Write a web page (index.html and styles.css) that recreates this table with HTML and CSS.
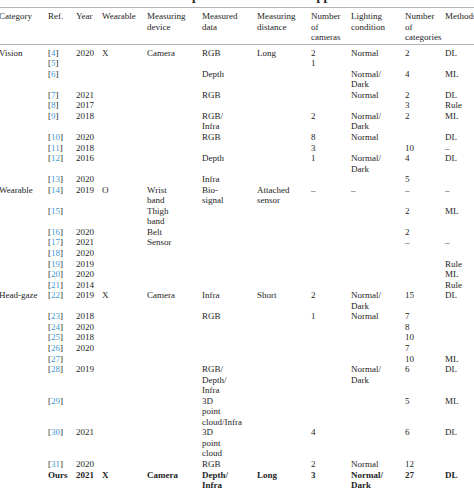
FILE: index.html
```html
<!DOCTYPE html>
<html lang="en">
<head>
<meta charset="utf-8">
<title>Comparison table</title>
<link rel="stylesheet" href="styles.css">
</head>
<body>
<div class="caption">Table 1 Comparison of the related approaches</div>
<table class="cmp">
<colgroup>
<col class="c-cat"><col class="c-ref"><col class="c-year"><col class="c-wear"><col class="c-dev"><col class="c-data"><col class="c-dist"><col class="c-cam"><col class="c-light"><col class="c-ncat"><col class="c-meth">
</colgroup>
<thead>
<tr><th>Category</th><th>Ref.</th><th>Year</th><th>Wearable</th><th>Measuring<br>device</th><th>Measured<br>data</th><th>Measuring<br>distance</th><th>Number<br>of<br>cameras</th><th>Lighting<br>condition</th><th>Number<br>of<br>categories</th><th>Methods</th></tr>
</thead>
<tbody>
<tr class="first"><td>Vision</td><td>[<a>4</a>]</td><td>2020</td><td>X</td><td>Camera</td><td>RGB</td><td>Long</td><td>2</td><td>Normal</td><td>2</td><td>DL</td></tr>
<tr><td></td><td>[<a>5</a>]</td><td></td><td></td><td></td><td></td><td></td><td>1</td><td></td><td></td><td></td></tr>
<tr><td></td><td>[<a>6</a>]</td><td></td><td></td><td></td><td>Depth</td><td></td><td></td><td>Normal/<br>Dark</td><td>4</td><td>ML</td></tr>
<tr><td></td><td>[<a>7</a>]</td><td>2021</td><td></td><td></td><td>RGB</td><td></td><td></td><td>Normal</td><td>2</td><td>DL</td></tr>
<tr><td></td><td>[<a>8</a>]</td><td>2017</td><td></td><td></td><td></td><td></td><td></td><td></td><td>3</td><td>Rule</td></tr>
<tr><td></td><td>[<a>9</a>]</td><td>2018</td><td></td><td></td><td>RGB/<br>Infra</td><td></td><td>2</td><td>Normal/<br>Dark</td><td>2</td><td>ML</td></tr>
<tr><td></td><td>[<a>10</a>]</td><td>2020</td><td></td><td></td><td>RGB</td><td></td><td>8</td><td>Normal</td><td></td><td>DL</td></tr>
<tr><td></td><td>[<a>11</a>]</td><td>2018</td><td></td><td></td><td></td><td></td><td>3</td><td></td><td>10</td><td>–</td></tr>
<tr><td></td><td>[<a>12</a>]</td><td>2016</td><td></td><td></td><td>Depth</td><td></td><td>1</td><td>Normal/<br>Dark</td><td>4</td><td>DL</td></tr>
<tr><td></td><td>[<a>13</a>]</td><td>2020</td><td></td><td></td><td>Infra</td><td></td><td></td><td></td><td>5</td><td></td></tr>
<tr><td>Wearable</td><td>[<a>14</a>]</td><td>2019</td><td>O</td><td>Wrist<br>band</td><td>Bio-<br>signal</td><td>Attached<br>sensor</td><td>–</td><td>–</td><td>–</td><td>–</td></tr>
<tr><td></td><td>[<a>15</a>]</td><td></td><td></td><td>Thigh<br>band</td><td></td><td></td><td></td><td></td><td>2</td><td>ML</td></tr>
<tr><td></td><td>[<a>16</a>]</td><td>2020</td><td></td><td>Belt</td><td></td><td></td><td></td><td></td><td>2</td><td></td></tr>
<tr><td></td><td>[<a>17</a>]</td><td>2021</td><td></td><td>Sensor</td><td></td><td></td><td></td><td></td><td>–</td><td>–</td></tr>
<tr><td></td><td>[<a>18</a>]</td><td>2020</td><td></td><td></td><td></td><td></td><td></td><td></td><td></td><td></td></tr>
<tr><td></td><td>[<a>19</a>]</td><td>2019</td><td></td><td></td><td></td><td></td><td></td><td></td><td></td><td>Rule</td></tr>
<tr><td></td><td>[<a>20</a>]</td><td>2020</td><td></td><td></td><td></td><td></td><td></td><td></td><td></td><td>ML</td></tr>
<tr><td></td><td>[<a>21</a>]</td><td>2014</td><td></td><td></td><td></td><td></td><td></td><td></td><td></td><td>Rule</td></tr>
<tr><td>Head-gaze</td><td>[<a>22</a>]</td><td>2019</td><td>X</td><td>Camera</td><td>Infra</td><td>Short</td><td>2</td><td>Normal/<br>Dark</td><td>15</td><td>DL</td></tr>
<tr><td></td><td>[<a>23</a>]</td><td>2018</td><td></td><td></td><td>RGB</td><td></td><td>1</td><td>Normal</td><td>7</td><td></td></tr>
<tr><td></td><td>[<a>24</a>]</td><td>2020</td><td></td><td></td><td></td><td></td><td></td><td></td><td>8</td><td></td></tr>
<tr><td></td><td>[<a>25</a>]</td><td>2018</td><td></td><td></td><td></td><td></td><td></td><td></td><td>10</td><td></td></tr>
<tr><td></td><td>[<a>26</a>]</td><td>2020</td><td></td><td></td><td></td><td></td><td></td><td></td><td>7</td><td></td></tr>
<tr><td></td><td>[<a>27</a>]</td><td></td><td></td><td></td><td></td><td></td><td></td><td></td><td>10</td><td>ML</td></tr>
<tr><td></td><td>[<a>28</a>]</td><td>2019</td><td></td><td></td><td>RGB/<br>Depth/<br>Infra</td><td></td><td></td><td>Normal/<br>Dark</td><td>6</td><td>DL</td></tr>
<tr><td></td><td>[<a>29</a>]</td><td></td><td></td><td></td><td>3D<br>point<br>cloud/Infra</td><td></td><td></td><td></td><td>5</td><td>ML</td></tr>
<tr><td></td><td>[<a>30</a>]</td><td>2021</td><td></td><td></td><td>3D<br>point<br>cloud</td><td></td><td>4</td><td></td><td>6</td><td>DL</td></tr>
<tr><td></td><td>[<a>31</a>]</td><td>2020</td><td></td><td></td><td>RGB</td><td></td><td>2</td><td>Normal</td><td>12</td><td></td></tr>
<tr class="ours"><td></td><td>Ours</td><td>2021</td><td>X</td><td>Camera</td><td>Depth/<br>Infra</td><td>Long</td><td>3</td><td>Normal/<br>Dark</td><td>27</td><td>DL</td></tr>
</tbody>
</table>
</body>
</html>
```
FILE: styles.css
```css
html, body {
  margin: 0;
  padding: 0;
  background: #ffffff;
}
body {
  overflow: hidden;
  font-family: "Liberation Serif", "Times New Roman", serif;
  color: #252525;
}
.caption {
  font-size: 12.6px;
  font-weight: bold;
  line-height: 14px;
  margin-top: -11px;
  padding-left: 124px;
  white-space: nowrap;
  color: #222;
}
.cmp {
  margin-top: 4px;
  margin-left: -1px;
  border-collapse: collapse;
  table-layout: fixed;
  width: 491px;
  font-size: 9px;
  line-height: 10.55px;
}
.cmp th, .cmp td {
  padding: 0;
  text-align: left;
  vertical-align: top;
  white-space: nowrap;
  font-weight: normal;
}
.cmp thead th {
  border-top: 1px solid #b4b4b4;
  border-bottom: 1px solid #b4b4b4;
  padding-top: 3px;
  padding-bottom: 1px;
}
.cmp tr.first td {
  padding-top: 3px;
}
.cmp a {
  color: #3f9ad2;
  text-decoration: none;
}
.cmp tr.ours td {
  font-weight: bold;
}
.c-cat { width: 49px; }
.c-ref { width: 28px; }
.c-year { width: 26px; }
.c-wear { width: 45px; }
.c-dev { width: 55px; }
.c-data { width: 55px; }
.c-dist { width: 54px; }
.c-cam { width: 40px; }
.c-light { width: 54px; }
.c-ncat { width: 40px; }
.c-meth { width: 45px; }
```
